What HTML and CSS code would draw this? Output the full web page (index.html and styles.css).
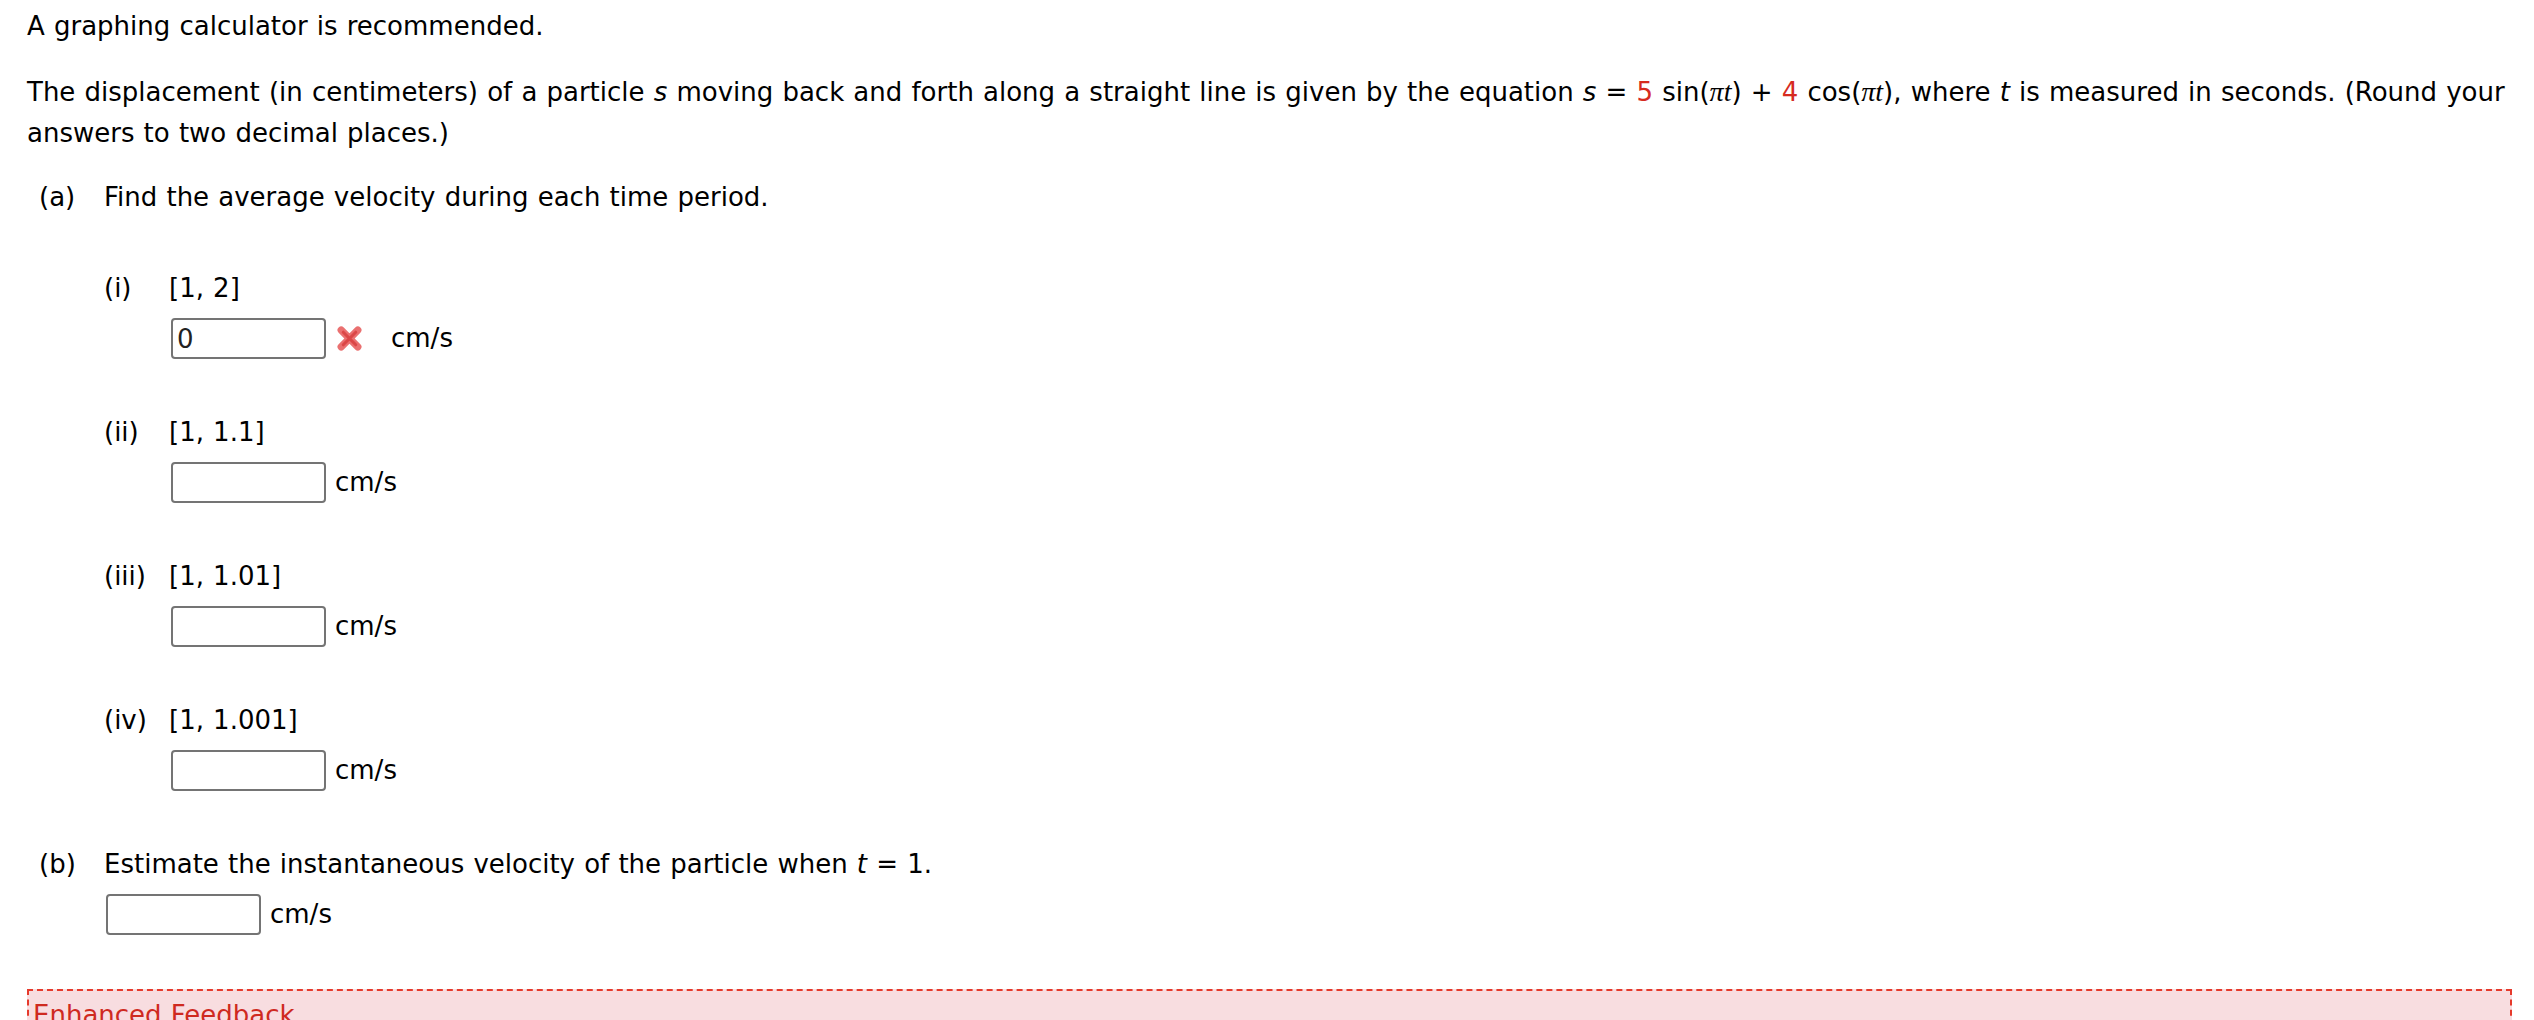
FILE: index.html
```html
<!DOCTYPE html>
<html lang="en">
<head>
<meta charset="utf-8">
<title>Average velocity</title>
<link rel="stylesheet" href="styles.css">
</head>
<body>
<p class="note">A graphing calculator is recommended.</p>
<p class="question">The displacement (in centimeters) of a particle <i class="var">s</i> moving back and forth along a straight line is given by the equation <i class="var">s</i> = <span class="rnd">5</span> sin(<i class="serif">&pi;t</i>) + <span class="rnd">4</span> cos(<i class="serif">&pi;t</i>), where <i class="var">t</i> is measured in seconds. (Round your answers to two decimal places.)</p>

<div class="part">
  <span class="part-label">(a)</span>
  <div class="part-body">
    <p class="line">Find the average velocity during each time period.</p>
    <div class="sub-list">
      <div class="sub">
        <span class="sub-label">(i)</span>
        <div class="sub-body">
          <p class="line">[1, 2]</p>
          <div class="answer-row">
            <input class="answer" type="text" value="0">
            <svg class="wrong" viewBox="0 0 26 26" aria-label="incorrect">
              <path d="M5 5 L21 21 M21 5 L5 21" stroke="#ea7070" stroke-width="7" stroke-linecap="round"/>
              <path d="M7 7 L19 19 M19 7 L7 19" stroke="#db4747" stroke-width="3" stroke-linecap="round"/>
            </svg>
            <span class="unit unit-after-icon">cm/s</span>
          </div>
        </div>
      </div>
      <div class="sub">
        <span class="sub-label">(ii)</span>
        <div class="sub-body">
          <p class="line">[1, 1.1]</p>
          <div class="answer-row">
            <input class="answer" type="text" value="">
            <span class="unit">cm/s</span>
          </div>
        </div>
      </div>
      <div class="sub">
        <span class="sub-label">(iii)</span>
        <div class="sub-body">
          <p class="line">[1, 1.01]</p>
          <div class="answer-row">
            <input class="answer" type="text" value="">
            <span class="unit">cm/s</span>
          </div>
        </div>
      </div>
      <div class="sub">
        <span class="sub-label">(iv)</span>
        <div class="sub-body">
          <p class="line">[1, 1.001]</p>
          <div class="answer-row">
            <input class="answer" type="text" value="">
            <span class="unit">cm/s</span>
          </div>
        </div>
      </div>
    </div>
  </div>
</div>

<div class="part">
  <span class="part-label">(b)</span>
  <div class="part-body">
    <p class="line">Estimate the instantaneous velocity of the particle when <i class="var">t</i> = 1.</p>
    <div class="answer-row">
      <input class="answer" type="text" value="">
      <span class="unit">cm/s</span>
    </div>
  </div>
</div>

<div class="feedback">
  <p class="feedback-title">Enhanced Feedback</p>
</div>
</body>
</html>
```

FILE: styles.css
```css
html, body {
  margin: 0;
  background: #ffffff;
}

body {
  padding: 6px 22px 0 27px;
  font-family: "DejaVu Sans", Verdana, sans-serif;
  font-size: 26px;
  line-height: 41px;
  word-spacing: 0.9px;
  color: #000000;
  overflow: hidden;
}

p {
  margin: 0;
}

.note {
  margin-bottom: 24px;
}

.question {
  margin-bottom: 23px;
}

.var {
  font-style: italic;
}

.serif {
  font-family: "Liberation Serif", "Times New Roman", serif;
  font-style: italic;
  font-size: 28px;
}

.rnd {
  color: #d62b1f;
}

.part {
  display: grid;
  grid-template-columns: 65px 1fr;
  padding-left: 12px;
}

.part-label {
  display: block;
}

.sub-list {
  margin-top: 50px;
}

.sub {
  display: grid;
  grid-template-columns: 65px 1fr;
  margin-bottom: 53px;
}

.answer-row {
  display: flex;
  align-items: center;
  margin-top: 9px;
  height: 41px;
}

.answer {
  box-sizing: border-box;
  width: 155px;
  height: 41px;
  margin: 0 0 0 2px;
  padding: 0 4px;
  border: 2px solid #747474;
  border-radius: 4px;
  font-family: "DejaVu Sans", Verdana, sans-serif;
  font-size: 26px;
  color: #222222;
  background: #ffffff;
  outline: none;
}

.wrong {
  width: 27px;
  height: 27px;
  margin-left: 10px;
  flex: none;
}

.unit {
  margin-left: 9px;
}

.unit-after-icon {
  margin-left: 28px;
}

.feedback {
  margin-top: 54px;
  border: 2px dashed #e63a2c;
  background: #f8dde0;
  padding: 4px 4px 30px;
}

.feedback-title {
  color: #cf2a1f;
}
```
